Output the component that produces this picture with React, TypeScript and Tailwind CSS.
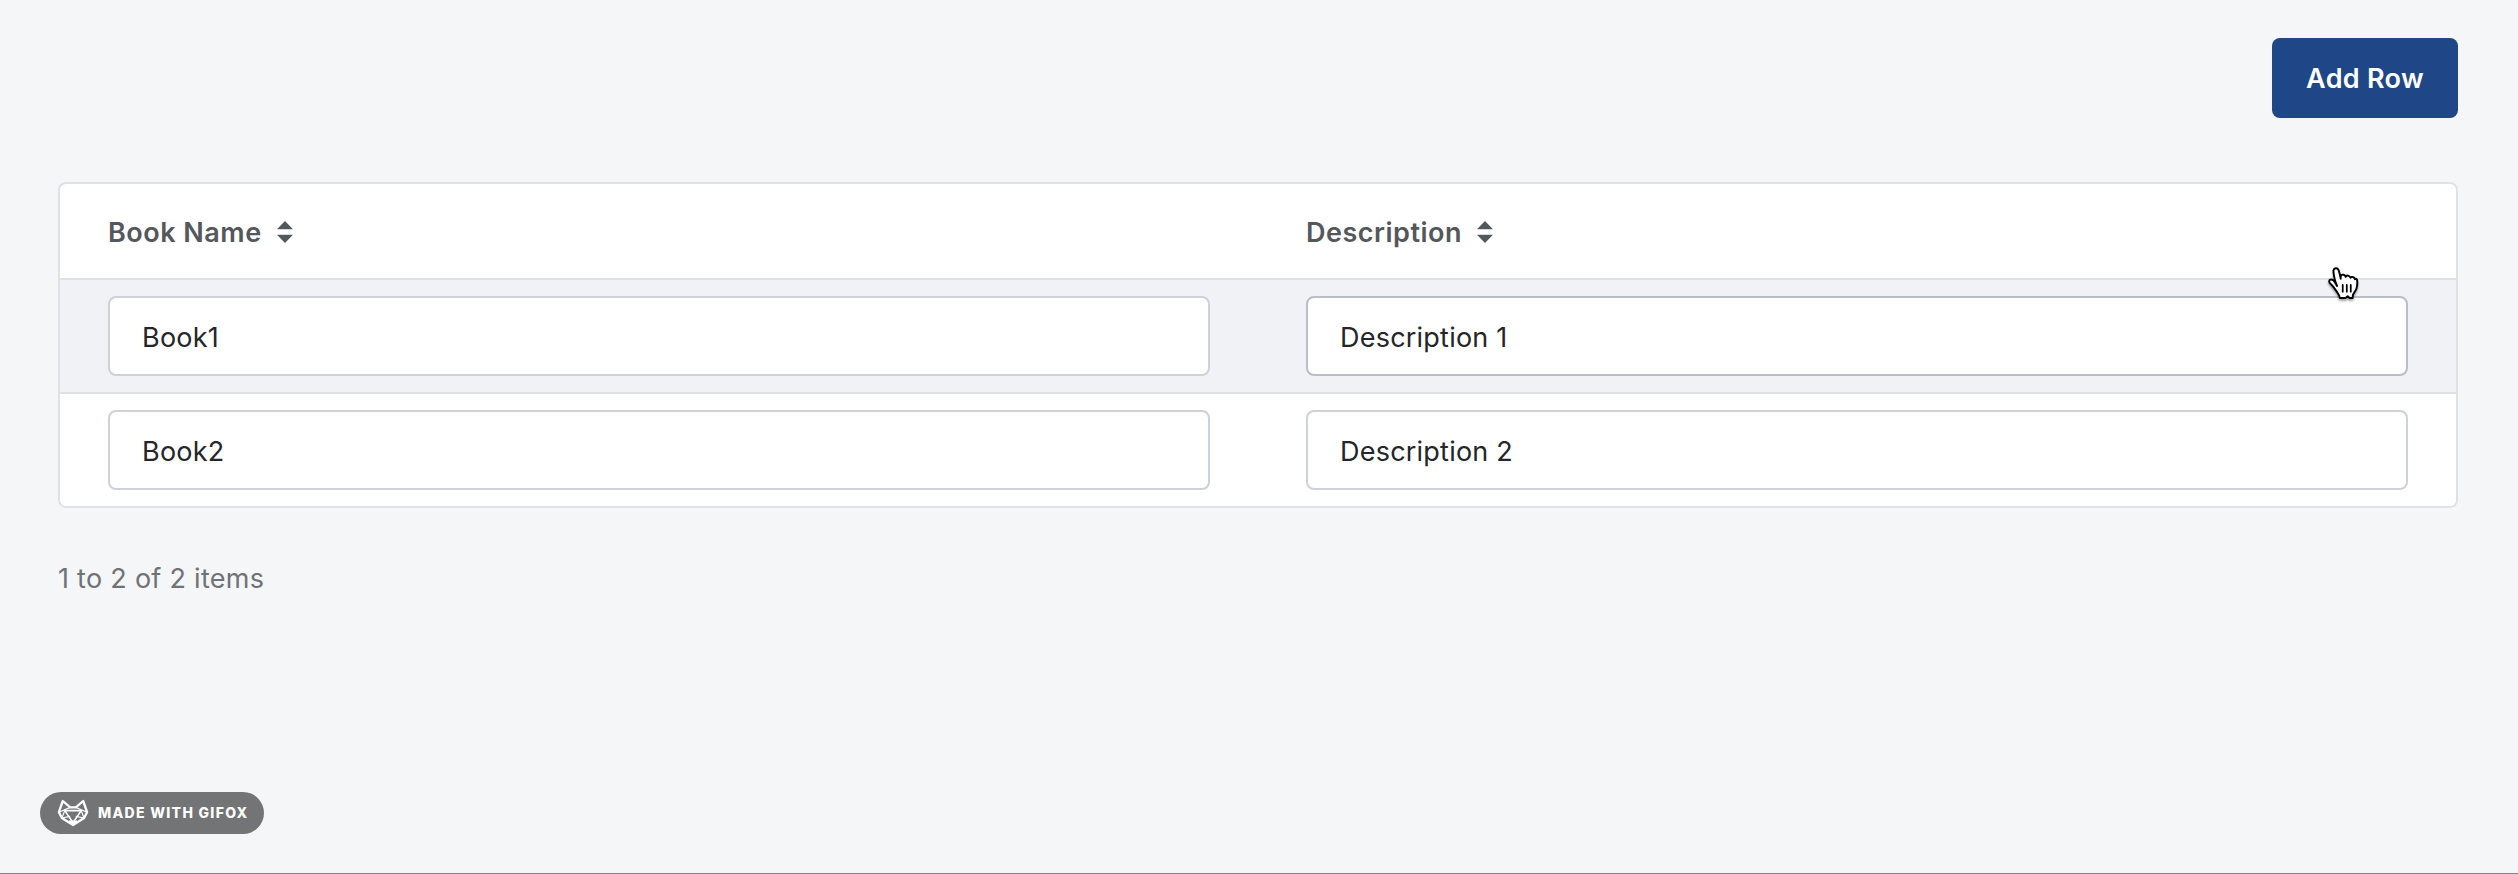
import { FC, useState } from "react";

type Book = {
  id: number;
  name: string;
  description: string;
};

type SortKey = "name" | "description";

const SortIcon: FC = () => (
  <svg viewBox="0 0 16 22" className="w-4 h-[22px] -mt-0.5 fill-[#54575b]">
    <path d="M8 0l8 8.3H0zM8 22l8-8.3H0z" />
  </svg>
);

const FoxIcon: FC = () => (
  <svg
    viewBox="0 0 32 28"
    className="w-8 h-7"
    fill="none"
    stroke="#fff"
    strokeWidth="1.2"
    strokeLinejoin="round"
  >
    <path
      strokeWidth="2.3"
      d="M5.8 2L13.2 8.4h5.6L26.2 2l3.9 11.2-3 5.8L16 26 4.9 19l-3-5.8z"
    />
    <path d="M2 13.2l11.2-4.8M30 13.2L18.8 8.4M7.8 11.6L4.9 19l8.3-1.6M24.2 11.6l2.9 7.4-8.3-1.6" />
    <path strokeWidth="1.6" d="M7.8 11.6h16.4L16 23.6z" />
    <path fill="#fff" d="M12.2 22.2h7.6L16 26z" />
  </svg>
);

const HandCursor: FC = () => (
  <svg
    viewBox="0 0 32 34"
    className="absolute left-[2328px] top-[267px] w-[31px] h-[33px] pointer-events-none drop-shadow-[0_2px_1px_rgba(0,0,0,0.35)]"
    strokeLinecap="round"
    strokeLinejoin="round"
  >
    <path
      fill="#fff"
      stroke="#000"
      strokeWidth="2"
      d="M9.3 19.5C8.4 17.5 7 13.4 6.4 10.1 5.9 7.4 5.4 4.8 5.7 3.4c.5-2.7 4-3 5.1-.5.9 2 1.8 6.3 2.4 9.2-.2-1.6-.2-3.1.5-3.7 1.2-1 3.8-.6 4.6 1.7.4-1.9 4.2-1.8 4.9 1 .7-1.5 4-1.2 4.7 1.4.3-.8 1.9-.5 2.1.9.4 2.8.2 6.6-.8 9.3-.8 2.2-3.2 4.7-3.6 6.7l-.2 2.6h-3.2l-1.8-1.9-2.3 1.9h-5.9c-.1-2.2-1.2-3.8-2.4-5.5C7.9 23.9 6.5 21.7 4.9 19.7 3.2 17.7 1 16.5 1.2 14.7c.2-2.1 2.7-2.3 4.5-.8 1.3 1.1 2.5 3.6 3.6 5.6z"
    />
    <path stroke="#000" strokeWidth="1.8" d="M15.2 18.5v7M19.4 18.5v7M23.5 18.5v7" />
  </svg>
);

const columns: { key: SortKey; label: string }[] = [
  { key: "name", label: "Book Name" },
  { key: "description", label: "Description" },
];

const App: FC = () => {
  const [books, setBooks] = useState<Book[]>([
    { id: 1, name: "Book1", description: "Description 1" },
    { id: 2, name: "Book2", description: "Description 2" },
  ]);

  const addRow = () =>
    setBooks((prev) => [
      ...prev,
      { id: prev.length + 1, name: "", description: "" },
    ]);

  const sortBy = (key: SortKey) =>
    setBooks((prev) => [...prev].sort((a, b) => a[key].localeCompare(b[key])));

  const updateBook = (id: number, key: SortKey, value: string) =>
    setBooks((prev) =>
      prev.map((book) => (book.id === id ? { ...book, [key]: value } : book))
    );

  return (
    <div className="relative flex flex-col w-full h-[874px] overflow-hidden bg-[#f4f6f8] border-b border-[#808286] font-['Inter',sans-serif] text-[27px] leading-10">
      <div className="flex justify-end pt-[38px] pr-[60px]">
        <button
          className="w-[186px] h-20 pt-0.5 rounded-lg bg-[#1f4686] text-white font-semibold tracking-[0.3px]"
          onClick={addRow}
        >
          Add Row
        </button>
      </div>

      <div className="mt-16 ml-[58px] w-[2400px] rounded-lg border-2 border-[#dee1e6] bg-white overflow-hidden">
        <div className="grid grid-cols-2 h-24 border-b-2 border-[#dee1e6]">
          {columns.map((column) => (
            <button
              key={column.key}
              className="flex items-center gap-[15px] px-12 pt-1 font-semibold text-[#54575b] tracking-[0.5px]"
              onClick={() => sortBy(column.key)}
            >
              {column.label}
              <SortIcon />
            </button>
          ))}
        </div>
        {books.map((book, index) => (
          <div
            key={book.id}
            className={`grid grid-cols-2 ${
              index % 2 === 0 ? "bg-[#f0f2f6]" : "bg-white"
            } ${index !== books.length - 1 ? "border-b-2 border-[#dee1e6]" : ""}`}
          >
            {columns.map(({ key }) => (
              <div key={key} className="px-12 py-4">
                <input
                  className={`block w-full h-20 px-8 pt-0.5 rounded-lg border-2 bg-white text-[#242629] tracking-[0.22px] outline-none ${
                    index === 0 && key === "description"
                      ? "border-[#b9bec8]"
                      : "border-[#cdd1d8]"
                  }`}
                  value={book[key]}
                  onChange={(e) => updateBook(book.id, key, e.target.value)}
                />
              </div>
            ))}
          </div>
        ))}
      </div>

      <p className="mt-[51px] ml-[58px] text-[#6f7277] tracking-[0.27px]">
        1 to {books.length} of {books.length} items
      </p>

      <div className="absolute left-10 top-[792px] flex items-center w-56 h-[42px] pl-[17px] gap-[9px] rounded-full bg-[#737476] text-white">
        <FoxIcon />
        <span className="text-[14px] leading-none font-extrabold tracking-[1.3px] whitespace-nowrap">
          MADE WITH GIFOX
        </span>
      </div>

      <HandCursor />
    </div>
  );
};

export default App;
